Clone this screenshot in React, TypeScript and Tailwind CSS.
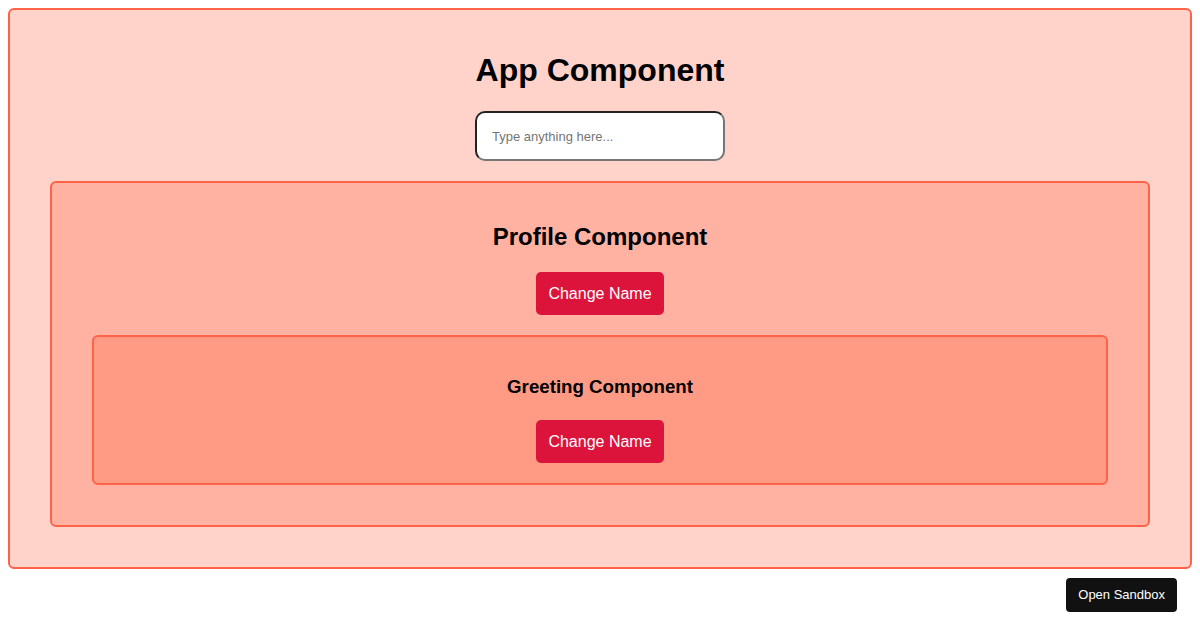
import { useState } from 'react'

// ─── Change-name button ───────────────────────────────────────────────────────

function ChangeButton({ onClick }: { onClick: () => void }) {
  return (
    <button
      onClick={onClick}
      className="rounded-[5px] bg-[#dc143c] px-3 py-3 text-[16px] leading-[19px] text-white"
    >
      Change Name
    </button>
  )
}

// ─── Greeting ─────────────────────────────────────────────────────────────────

function Greeting({ onChange }: { onChange: () => void }) {
  return (
    <div className="m-5 mb-0 rounded-[6px] border-2 border-[#ff6347] bg-[#ff9a85] px-5 pt-5 pb-5 text-center">
      <h3 className="mt-[19px] mb-[22px] text-[18.7px] leading-[22px] font-bold">Greeting Component</h3>
      <ChangeButton onClick={onChange} />
    </div>
  )
}

// ─── Profile ──────────────────────────────────────────────────────────────────

function Profile({ onChange }: { onChange: () => void }) {
  return (
    <div className="m-5 rounded-[6px] border-2 border-[#ff6347] bg-[#ffb1a2] px-5 pt-5 pb-10 text-center">
      <h2 className="mt-5 mb-[21px] text-[24px] leading-[28px] font-bold">Profile Component</h2>
      <ChangeButton onClick={onChange} />
      <Greeting onChange={onChange} />
    </div>
  )
}

// ─── App ──────────────────────────────────────────────────────────────────────

export default function App() {
  const [text, setText] = useState('')
  const [, setName] = useState('John')

  const change = () => setName((n) => (n === 'John' ? 'Jane' : 'John'))

  return (
    <div className="m-2 font-['Liberation_Sans',Arial,sans-serif] text-black">
      <div className="rounded-[6px] border-2 border-[#ff6347] bg-[#ffd3ca] p-5 text-center">
        <h1 className="mt-[22px] mb-[22px] text-[32px] leading-[37px] font-bold">App Component</h1>
        <input
          type="text"
          value={text}
          onChange={(e) => setText(e.target.value)}
          placeholder="Type anything here..."
          className="h-[50px] w-[250px] rounded-[10px] border-2 border-t-[#222] border-l-[#222] border-r-[#767676] border-b-[#767676] bg-white px-[15px] text-[13px] outline-none placeholder:text-[#757575]"
        />
        <Profile onChange={change} />
      </div>

      <button className="fixed right-[23px] bottom-[18px] h-[34px] rounded-[4px] bg-[#111] px-3 text-[13px] text-white">
        Open Sandbox
      </button>
    </div>
  )
}
